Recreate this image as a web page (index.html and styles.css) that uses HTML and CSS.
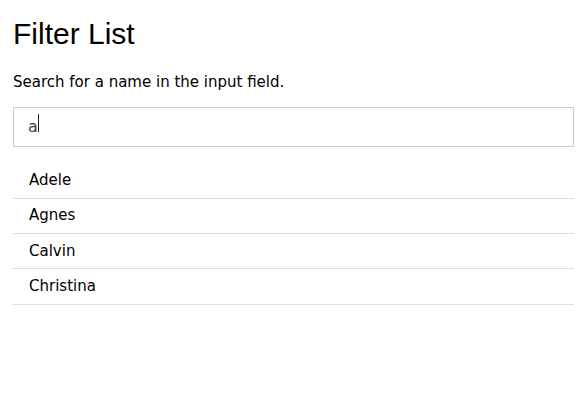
FILE: index.html
```html
<!DOCTYPE html>
<html lang="en">
<head>
    <meta charset="UTF-8">
    <meta name="viewport" content="width=device-width, initial-scale=1.0">
    <title>Filter List</title>
    <link rel="stylesheet" href="styles.css">
</head>
<body>
    <h2>Filter List</h2>
    <p class="hint">Search for a name in the input field.</p>

    <div class="search-box">
        <input type="text" id="searchInput" class="search" value="a" autofocus>
        <span class="caret"></span>
    </div>

    <ul class="names" id="nameList">
        <li>Adele</li>
        <li>Agnes</li>
        <li>Calvin</li>
        <li>Christina</li>
    </ul>
</body>
</html>
```

FILE: styles.css
```css
body {
    font-family: 'DejaVu Sans', sans-serif;
    font-size: 15px;
    margin: 0;
    padding: 0 13px;
    background: #fff;
    color: #000;
}

h2 {
    font-family: 'Liberation Sans', Arial, sans-serif;
    font-size: 30px;
    font-weight: normal;
    margin: 16.5px 0 0;
}

.hint {
    margin: 22.5px 0 0;
}

.search-box {
    position: relative;
    margin-top: 15.5px;
}

.search {
    display: block;
    width: 100%;
    box-sizing: border-box;
    height: 40px;
    padding: 0 14px;
    border: 1px solid #ccc;
    border-radius: 0;
    font-family: 'DejaVu Sans', sans-serif;
    font-size: 16px;
    color: #444;
    outline: none;
    caret-color: transparent;
}

/* fake text cursor after the typed "a" */
.caret {
    position: absolute;
    left: 25px;
    top: 7px;
    width: 1px;
    height: 18px;
    background: #222;
}

.names {
    list-style: none;
    margin: 17px 0 0;
    padding: 0;
}

.names li {
    line-height: 17.33px;
    padding: 8.5px 16px;
    border-bottom: 1px solid #ddd;
}
```
